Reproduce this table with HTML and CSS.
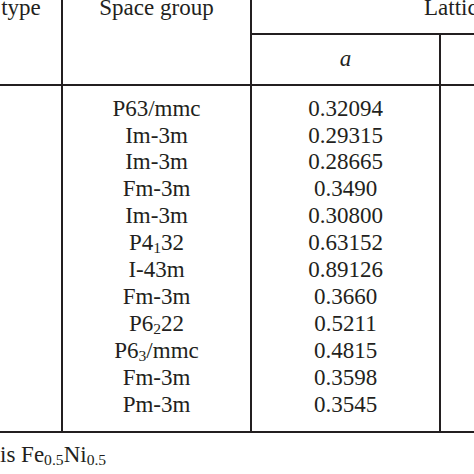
FILE: index.html
```html
<!DOCTYPE html>
<html lang="en">
<head>
<meta charset="utf-8">
<title>Crystal structures</title>
<link rel="stylesheet" href="styles.css">
</head>
<body>
<div class="page">
  <table class="data">
    <colgroup>
      <col class="c-type">
      <col class="c-sg">
      <col class="c-lat">
      <col class="c-lat">
      <col class="c-lat">
    </colgroup>
    <thead>
      <tr class="top">
        <th class="h-type" rowspan="2">Structure type</th>
        <th class="h-sg vl" rowspan="2">Space group</th>
        <th class="h-lat vl" colspan="3">Lattice parameters (nm)</th>
      </tr>
      <tr>
        <th class="h-sub vl"><i>a</i></th>
        <th class="h-sub vl"><i>b</i></th>
        <th class="h-sub vl"><i>c</i></th>
      </tr>
    </thead>
    <tbody>
      <tr class="first"><td></td><td class="vl">P63/mmc</td><td class="vl">0.32094</td><td class="vl"></td><td class="vl"></td></tr>
      <tr><td></td><td class="vl">Im-3m</td><td class="vl">0.29315</td><td class="vl"></td><td class="vl"></td></tr>
      <tr><td></td><td class="vl">Im-3m</td><td class="vl">0.28665</td><td class="vl"></td><td class="vl"></td></tr>
      <tr><td></td><td class="vl">Fm-3m</td><td class="vl">0.3490</td><td class="vl"></td><td class="vl"></td></tr>
      <tr><td></td><td class="vl">Im-3m</td><td class="vl">0.30800</td><td class="vl"></td><td class="vl"></td></tr>
      <tr><td></td><td class="vl">P4<sub>1</sub>32</td><td class="vl">0.63152</td><td class="vl"></td><td class="vl"></td></tr>
      <tr><td></td><td class="vl">I-43m</td><td class="vl">0.89126</td><td class="vl"></td><td class="vl"></td></tr>
      <tr><td></td><td class="vl">Fm-3m</td><td class="vl">0.3660</td><td class="vl"></td><td class="vl"></td></tr>
      <tr><td></td><td class="vl">P6<sub>2</sub>22</td><td class="vl">0.5211</td><td class="vl"></td><td class="vl"></td></tr>
      <tr><td></td><td class="vl">P6<sub>3</sub>/mmc</td><td class="vl">0.4815</td><td class="vl"></td><td class="vl"></td></tr>
      <tr><td></td><td class="vl">Fm-3m</td><td class="vl">0.3598</td><td class="vl"></td><td class="vl"></td></tr>
      <tr class="last"><td></td><td class="vl">Pm-3m</td><td class="vl">0.3545</td><td class="vl"></td><td class="vl"></td></tr>
    </tbody>
  </table>
  <p class="note">is Fe<sub>0.5</sub>Ni<sub>0.5</sub></p>
</div>
</body>
</html>
```

FILE: styles.css
```css
html, body {
  margin: 0;
  padding: 0;
  background: #ffffff;
}

.page {
  width: 474px;
  height: 474px;
  overflow: hidden;
  background: #ffffff;
  color: #231f20;
  font-family: "Liberation Serif", "Times New Roman", serif;
  font-size: 23px;
  line-height: 26.9px;
}

.data {
  border-collapse: separate;
  border-spacing: 0;
  table-layout: fixed;
  width: 926px;
  margin: 0 0 0 -109px;
}

.c-type { width: 170px; }
.c-sg { width: 189px; }
.c-lat { width: 189px; }

.data th,
.data td {
  padding: 0;
  text-align: center;
  font-weight: normal;
  white-space: nowrap;
  vertical-align: top;
  box-sizing: border-box;
}

.data .vl {
  border-left: 2px solid #231f20;
}

.data tr.top th {
  line-height: 16px;
}

.h-type,
.h-sg {
  border-bottom: 2px solid #231f20;
}

.data .h-lat {
  padding-bottom: 17px;
  border-bottom: 2px solid #231f20;
}

.data .h-sub {
  padding: 11px 0 11px;
  border-bottom: 2px solid #231f20;
}

.data tr.first td {
  padding-top: 9.7px;
}

.data tr.last td {
  padding-bottom: 12.4px;
  border-bottom: 2px solid #231f20;
}

sub {
  font-size: 0.68em;
  line-height: 0;
  vertical-align: -0.22em;
}

.note {
  margin: 9px 0 0 0;
  white-space: nowrap;
}
```
